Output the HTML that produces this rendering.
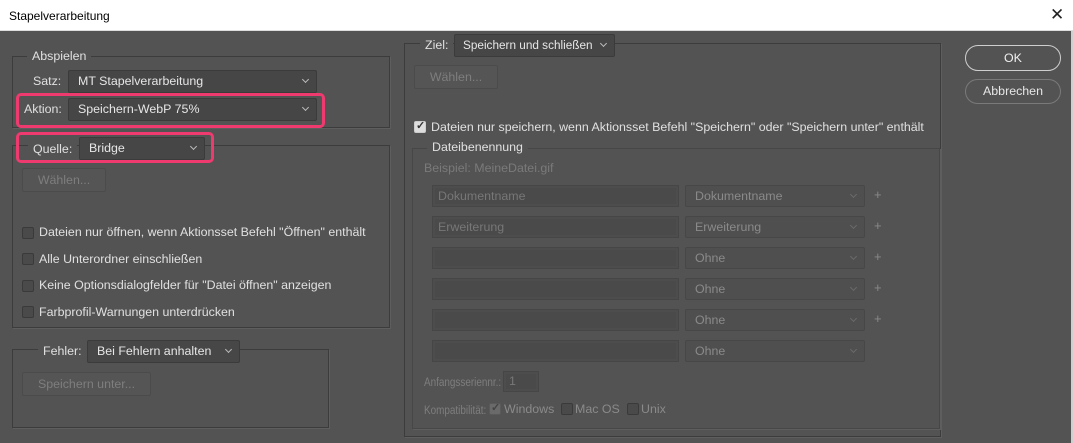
<!DOCTYPE html>
<html><head><meta charset="utf-8"><style>
*{box-sizing:border-box;margin:0;padding:0}
body{width:1073px;height:443px;overflow:hidden;background:#535353;font-family:"Liberation Sans",sans-serif;font-size:12.4px;color:#e0e0e0;position:relative}
.a{position:absolute;white-space:nowrap}
.title{left:0;top:0;width:1073px;height:31px;background:#fff;color:#000;border-bottom:1px solid #ddd}
.box{position:absolute;border:1px solid #3c3c3c;box-shadow:1px 1px 0 #5e5e5e}
.lbl{position:absolute;background:#535353;padding:0 5px;line-height:14px}
.dd{position:absolute;background:#464646;border:1px solid #3b3b3b;border-radius:2px;padding-left:9px;line-height:20px;color:#e6e6e6}
.dd::after{content:"";position:absolute;right:8px;top:6px;width:4px;height:4px;border-right:1px solid #bbb;border-bottom:1px solid #bbb;transform:rotate(45deg)}
.dd.dis{background:#4f4f4f;border-color:#474747;color:#8a8a8a}
.dd.dis::after{border-color:#6a6a6a}
.btn{position:absolute;border:1px solid #4b4b4b;background:#555;border-radius:2px;color:#7e7e7e;text-align:center;line-height:22px}
.cb{position:absolute;width:12px;height:12px;border:1px solid #3a3a3a;background:#4a4a4a;border-radius:2px}
.tf{position:absolute;background:#4a4a4a;border:1px solid #464646;box-shadow:inset 0 0 0 2px #4d4d4d;color:#777;padding-left:5px;line-height:20px}
.pink{position:absolute;border:3px solid #ee3a6e;border-radius:5px}
.dim{color:#8a8a8a}
.plus{position:absolute;color:#888;font-size:13px}
.sq{transform-origin:left center;display:inline-block}
</style></head><body>
<div class="a title"><span class="a" style="left:9px;top:9px;font-size:12px">Stapelverarbeitung</span>
<span class="a" style="left:1050px;top:5px;font-size:17px;color:#222">✕</span></div>

<div class="box" style="left:12px;top:56px;width:378px;height:72px"></div>
<div class="lbl" style="left:27px;top:49px">Abspielen</div>
<span class="a" style="left:33px;top:74px">Satz:</span>
<div class="dd" style="left:68px;top:70px;width:249px;height:23px">MT Stapelverarbeitung</div>
<span class="a" style="left:24px;top:102px">Aktion:</span>
<div class="dd" style="left:68px;top:98px;width:249px;height:23px">Speichern-WebP 75%</div>
<div class="pink" style="left:16px;top:93px;width:309px;height:35px"></div>

<div class="box" style="left:12px;top:145px;width:378px;height:183px"></div>
<div class="lbl" style="left:28px;top:142px">Quelle:</div>
<div class="dd" style="left:79px;top:137px;width:126px;height:23px">Bridge</div>
<div class="pink" style="left:16px;top:132px;width:198px;height:31px"></div>
<div class="btn" style="left:22px;top:168px;width:84px;height:24px">Wählen...</div>
<div class="cb" style="left:22px;top:227px"></div><span class="a" style="left:39px;top:225px">Dateien nur öffnen, wenn Aktionsset Befehl "Öffnen" enthält</span>
<div class="cb" style="left:22px;top:253px"></div><span class="a" style="left:39px;top:252px">Alle Unterordner einschließen</span>
<div class="cb" style="left:22px;top:280px"></div><span class="a" style="left:39px;top:278px">Keine Optionsdialogfelder für "Datei öffnen" anzeigen</span>
<div class="cb" style="left:22px;top:306px"></div><span class="a" style="left:39px;top:305px">Farbprofil-Warnungen unterdrücken</span>

<div class="box" style="left:12px;top:349px;width:317px;height:79px"></div>
<div class="lbl" style="left:38px;top:344px">Fehler:</div>
<div class="dd" style="left:87px;top:340px;width:153px;height:23px;background:#474747">Bei Fehlern anhalten</div>
<div class="btn" style="left:22px;top:372px;width:129px;height:24px">Speichern unter...</div>

<div class="box" style="left:404px;top:43px;width:537px;height:394px"></div>
<div class="lbl" style="left:420px;top:38px">Ziel:</div>
<div class="dd" style="left:454px;top:34px;width:161px;height:23px;padding-left:8px"><span class="sq" style="transform:scaleX(0.95)">Speichern und schließen</span></div>
<div class="btn" style="left:414px;top:65px;width:84px;height:24px">Wählen...</div>
<div class="cb" style="left:414px;top:121px;background:#ddd;border-color:#ccc"><span class="a" style="left:1px;top:-3px;color:#333;font-size:11px;font-weight:bold">✓</span></div>
<span class="a" style="left:431px;top:120px">Dateien nur speichern, wenn Aktionsset Befehl "Speichern" oder "Speichern unter" enthält</span>

<div class="box" style="left:412px;top:148px;width:528px;height:281px;border-color:#474747"></div>
<div class="lbl" style="left:427px;top:140px">Dateibenennung</div>
<span class="a dim" style="left:424px;top:161px;color:#7a7a7a">Beispiel: MeineDatei.gif</span>

<div class="tf" style="left:432px;top:185px;width:247px;height:22px">Dokumentname</div>
<div class="dd dis" style="left:685px;top:185px;width:180px;height:22px">Dokumentname</div><span class="plus" style="left:874px;top:187px">+</span>
<div class="tf" style="left:432px;top:216px;width:247px;height:22px">Erweiterung</div>
<div class="dd dis" style="left:685px;top:216px;width:180px;height:22px">Erweiterung</div><span class="plus" style="left:874px;top:218px">+</span>
<div class="tf" style="left:432px;top:247px;width:247px;height:22px"></div>
<div class="dd dis" style="left:685px;top:247px;width:180px;height:22px">Ohne</div><span class="plus" style="left:874px;top:249px">+</span>
<div class="tf" style="left:432px;top:278px;width:247px;height:22px"></div>
<div class="dd dis" style="left:685px;top:278px;width:180px;height:22px">Ohne</div><span class="plus" style="left:874px;top:280px">+</span>
<div class="tf" style="left:432px;top:309px;width:247px;height:22px"></div>
<div class="dd dis" style="left:685px;top:309px;width:180px;height:22px">Ohne</div><span class="plus" style="left:874px;top:311px">+</span>
<div class="tf" style="left:432px;top:340px;width:247px;height:22px"></div>
<div class="dd dis" style="left:685px;top:340px;width:180px;height:22px">Ohne</div>

<div class="tf" style="left:503px;top:371px;width:36px;height:21px;line-height:19px">1</div>
<span class="a" style="left:424px;top:375px;color:#7e7e7e"><span class="sq" style="transform:scaleX(0.8)">Anfangsseriennr.:</span></span>
<span class="a" style="left:424px;top:403px;color:#7e7e7e"><span class="sq" style="transform:scaleX(0.8)">Kompatibilität:</span></span>
<div class="cb" style="left:489px;top:403px;background:#6a6a6a;border-color:#5a5a5a"><span class="a" style="left:1px;top:-3px;color:#444;font-size:11px;font-weight:bold">✓</span></div>
<span class="a" style="left:504px;top:402px;color:#8a8a8a">Windows</span>
<div class="cb" style="left:561px;top:403px"></div><span class="a" style="left:575px;top:402px;color:#8a8a8a">Mac OS</span>
<div class="cb" style="left:627px;top:403px"></div><span class="a" style="left:641px;top:402px;color:#8a8a8a">Unix</span>

<div class="a" style="left:965px;top:45px;width:96px;height:26px;border:1px solid #cfcfcf;border-radius:13px;text-align:center;line-height:24px;color:#f0f0f0">OK</div>
<div class="a" style="left:965px;top:79px;width:96px;height:25px;border:1px solid #7a7a7a;border-radius:13px;text-align:center;line-height:23px;color:#e6e6e6">Abbrechen</div>
<div class="a" style="left:1071px;top:31px;width:2px;height:412px;background:#cfcfcf"></div>
</body></html>
